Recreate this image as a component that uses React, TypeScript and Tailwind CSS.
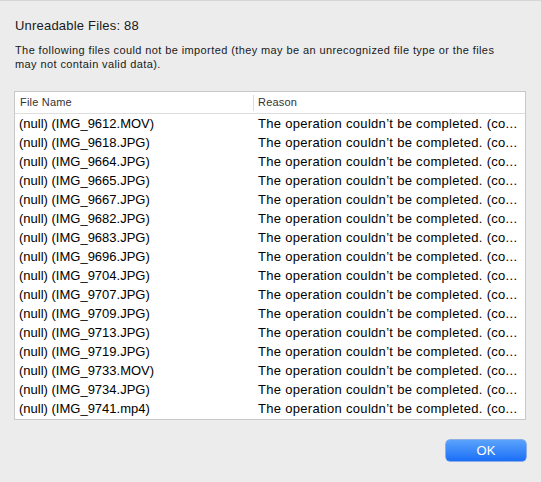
const files = [
  "IMG_9612.MOV",
  "IMG_9618.JPG",
  "IMG_9664.JPG",
  "IMG_9665.JPG",
  "IMG_9667.JPG",
  "IMG_9682.JPG",
  "IMG_9683.JPG",
  "IMG_9696.JPG",
  "IMG_9704.JPG",
  "IMG_9707.JPG",
  "IMG_9709.JPG",
  "IMG_9713.JPG",
  "IMG_9719.JPG",
  "IMG_9733.MOV",
  "IMG_9734.JPG",
  "IMG_9741.mp4",
];

export default function App() {
  return (
    <div
      className="w-[541px] h-[482px] bg-[#ececec] border-t border-[#d6d6d6] text-[#1a1a1a] flex flex-col pl-[14px] pr-[15px]"
      style={{ fontFamily: '"Liberation Sans", Arial, sans-serif' }}
    >
      <h1 className="text-[13px] leading-[16px] mt-[17px] ml-px tracking-[0.2px]">Unreadable Files: 88</h1>
      <p className="text-[11px] leading-[14px] mt-[9px] ml-px tracking-[0.4px] whitespace-nowrap">
        The following files could not be imported (they may be an unrecognized file type or the files
        <br />
        may not contain valid data).
      </p>

      <div className="mt-[20px] bg-white border border-[#c8c8c8] h-[329px] flex flex-col">
        <div className="flex h-[22px] border-b border-[#dedede] text-[11px] text-[#333] tracking-[0.2px]">
          <div className="w-[238px] pl-[5px] flex items-center">File Name</div>
          <div className="flex items-center">
            <div className="w-px h-[16px] bg-[#dcdcdc]" />
            <span className="pl-[4px]">Reason</span>
          </div>
        </div>
        <div className="flex flex-col">
          {files.map((f) => (
            <div key={f} className="flex h-[19px] items-center text-[13px] text-black">
              <div className="w-[243px] pl-[4px] whitespace-nowrap">(null) ({f})</div>
              <div className="whitespace-nowrap tracking-[0.3px]">
                The operation couldn’t be completed. (co...
              </div>
            </div>
          ))}
        </div>
      </div>

      <div className="flex justify-end mt-[20px]">
        <button className="w-[80px] h-[21px] rounded-[4px] bg-gradient-to-b from-[#5aa2fb] to-[#1a6ef7] text-white text-[13px] leading-none shadow-[0_0_0_0.5px_#2f6fe0]">
          OK
        </button>
      </div>
    </div>
  );
}
